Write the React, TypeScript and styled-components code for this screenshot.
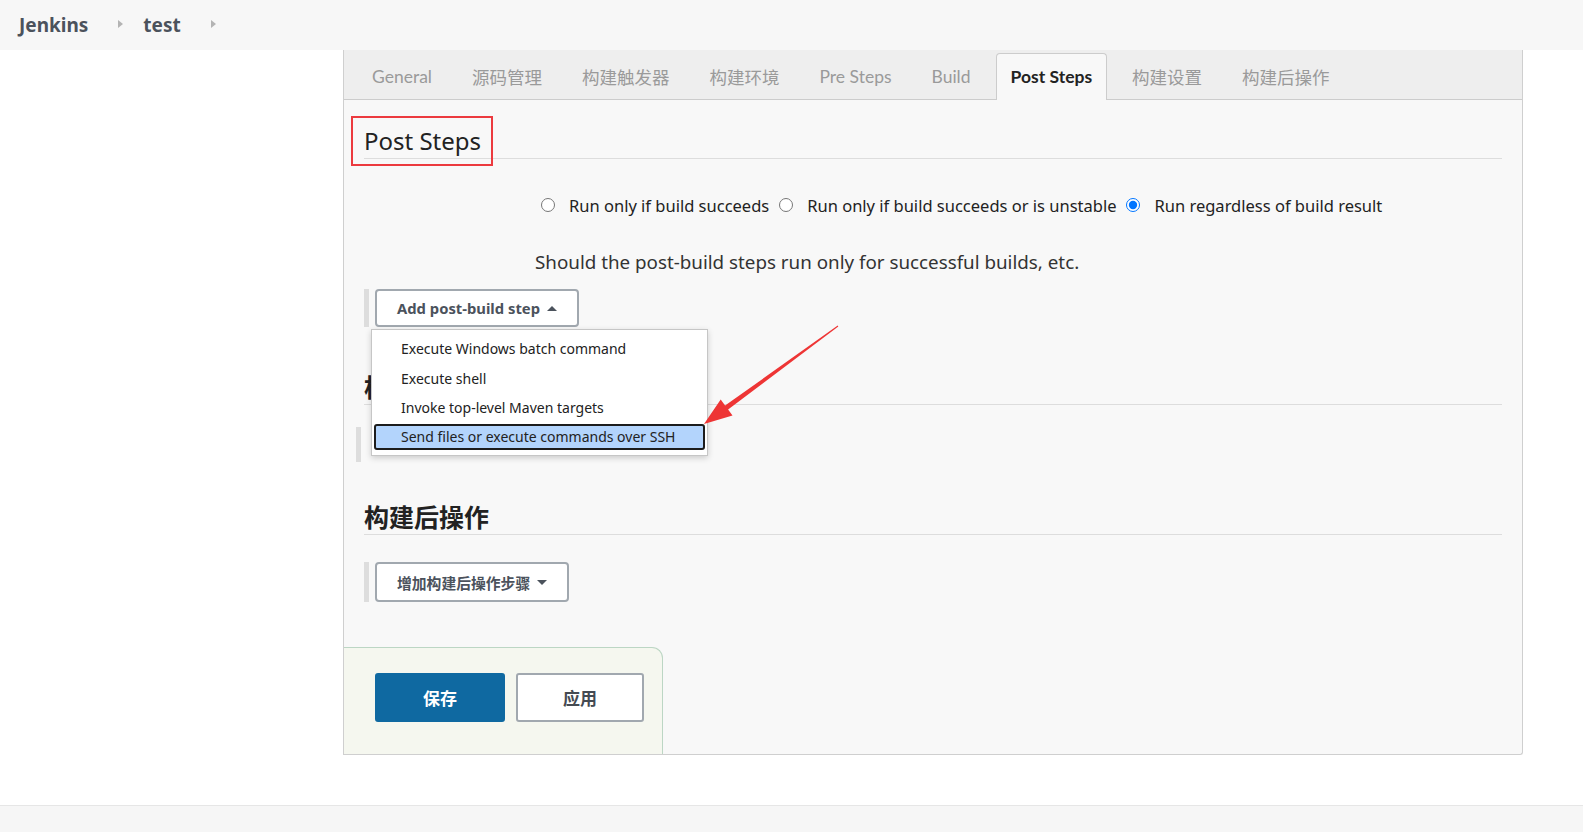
import React from "react";
import styled, { createGlobalStyle } from "styled-components";

const GlobalStyle = createGlobalStyle`
  html, body {
    margin: 0;
    padding: 0;
    background: #ffffff;
    font-family: "Noto Sans", "Noto Sans CJK SC", sans-serif;
    color: #333333;
  }
`;

const Page = styled.div`
  position: relative;
  width: 1583px;
  height: 832px;
  overflow: hidden;
  display: flex;
  flex-direction: column;
`;

const Header = styled.div`
  height: 50px;
  background: #f7f7f7;
  display: flex;
  align-items: center;
  padding-left: 19px;
  flex-shrink: 0;
`;

const Crumb = styled.span`
  font-size: 19px;
  font-weight: 700;
  color: #4b525c;
`;

const Chevron = styled.span`
  display: inline-block;
  width: 0;
  height: 0;
  border-top: 4px solid transparent;
  border-bottom: 4px solid transparent;
  border-left: 5px solid #b4b4b4;
  margin: 0 20px 2px 30px;
`;

const Main = styled.div`
  display: flex;
  flex-shrink: 0;
`;

const Sidebar = styled.div`
  width: 343px;
  flex-shrink: 0;
`;

const Panel = styled.div`
  width: 1178px;
  height: 704px;
  background: #f8f8f8;
  border: 1px solid #cfcfcf;
  border-top: none;
  border-radius: 0 0 3px 0;
  display: flex;
  flex-direction: column;
`;

const TabBar = styled.div`
  height: 49px;
  background: #eeeeee;
  border-bottom: 1px solid #cccccc;
  display: flex;
  align-items: flex-end;
  gap: 10px;
  padding-left: 13px;
`;

const Tab = styled.div<{ $active?: boolean }>`
  box-sizing: border-box;
  height: 47px;
  padding: 0 14px;
  display: flex;
  align-items: center;
  padding-bottom: 2px;
  font-family: Lato, "Noto Sans CJK SC", sans-serif;
  font-size: 17.5px;
  color: ${(p) => (p.$active ? "#222" : "#9a9a9a")};
  font-weight: ${(p) => (p.$active ? 700 : 400)};
  background: ${(p) => (p.$active ? "#f8f8f8" : "transparent")};
  border: 1px solid ${(p) => (p.$active ? "#cccccc" : "transparent")};
  border-bottom: none;
  border-radius: 4px 4px 0 0;
  margin-bottom: -1px;
`;

const Content = styled.div`
  flex: 1;
  padding: 0 20px;
  display: flex;
  flex-direction: column;
`;

const SectionTitle = styled.div<{ $top: number; $bold?: boolean }>`
  position: relative;
  margin-top: ${(p) => p.$top}px;
  font-size: ${(p) => (p.$bold ? 25 : 24)}px;
  font-weight: ${(p) => (p.$bold ? 700 : 400)};
  line-height: 34px;
  color: #222;
  border-bottom: 1px solid #dddddd;
`;

const Highlight = styled.div`
  position: absolute;
  left: -13px;
  top: -8px;
  width: 138px;
  height: 46px;
  border: 2px solid #ec3a3f;
`;

const Indented = styled.div`
  padding-left: 171px;
`;

const RadioRow = styled.div`
  margin-top: 34px;
  height: 24px;
  display: flex;
  align-items: center;
  font-size: 16.5px;
  color: #222;
`;

const RadioOption = styled.label`
  display: flex;
  align-items: center;
  margin-left: 6px;
  gap: 14px;
  margin-right: 4px;
`;

const Radio = styled.input`
  width: 14px;
  height: 14px;
  margin: 0;
  accent-color: #0075ff;
`;

const Description = styled.div`
  margin-top: 33px;
  line-height: 24px;
  font-size: 18.8px;
  color: #333;
`;

const ButtonRow = styled.div<{ $top: number }>`
  position: relative;
  margin-top: ${(p) => p.$top}px;
  border-left: 5px solid #dddddd;
  padding-left: 6px;
  display: flex;
`;

const DropButton = styled.button<{ $h: number }>`
  height: ${(p) => p.$h}px;
  box-sizing: border-box;
  padding: 0 20px;
  background: #ffffff;
  border: 2px solid #a1a8af;
  border-radius: 4px;
  font-family: "Noto Sans", "Noto Sans CJK SC", sans-serif;
  font-size: 14.8px;
  font-weight: 700;
  color: #4b525c;
  display: flex;
  align-items: center;
  gap: 7px;
`;

const Caret = styled.span<{ $up?: boolean }>`
  width: 0;
  height: 0;
  border-left: 5px solid transparent;
  border-right: 5px solid transparent;
  ${(p) =>
    p.$up ? "border-bottom: 5px solid #4b525c;" : "border-top: 5px solid #4b525c;"}
`;

const Menu = styled.div`
  position: absolute;
  left: 2px;
  top: 40px;
  width: 335px;
  padding: 4px 0 5px;
  background: #ffffff;
  border: 1px solid #c6c6c6;
  box-shadow: 0 2px 6px rgba(0, 0, 0, 0.18);
  z-index: 5;
`;

const MenuItem = styled.div<{ $selected?: boolean }>`
  height: ${(p) => (p.$selected ? "26px" : "29.5px")};
  box-sizing: border-box;
  display: flex;
  align-items: center;
  font-size: 14px;
  color: #222;
  padding-left: ${(p) => (p.$selected ? 25 : 29)}px;
  margin: ${(p) => (p.$selected ? "1px 2px 0" : "0")};
  background: ${(p) => (p.$selected ? "#b3d4fc" : "transparent")};
  border: ${(p) => (p.$selected ? "2px solid #1c1c1c" : "none")};
  border-radius: ${(p) => (p.$selected ? "3px" : "0")};
`;

const SideBar = styled.div`
  margin-top: 22px;
  margin-left: -8px;
  width: 5px;
  height: 35px;
  background: #dddddd;
`;

const BottomBar = styled.div`
  margin-top: auto;
  width: 287px;
  height: 81px;
  background: #f5f7ef;
  border-top: 1px solid #bcd6c4;
  border-right: 1px solid #bcd6c4;
  border-radius: 0 11px 0 0;
  display: flex;
  align-items: flex-start;
  gap: 11px;
  padding: 25px 0 0 31px;
  box-sizing: content-box;
`;

const ActionButton = styled.button<{ $primary?: boolean }>`
  width: ${(p) => (p.$primary ? 130 : 128)}px;
  height: 49px;
  box-sizing: border-box;
  border-radius: 3px;
  border: 2px solid ${(p) => (p.$primary ? "#0f69a1" : "#a1a8af")};
  background: ${(p) => (p.$primary ? "#0f69a1" : "#ffffff")};
  color: ${(p) => (p.$primary ? "#ffffff" : "#444a52")};
  font-family: "Noto Sans", "Noto Sans CJK SC", sans-serif;
  font-size: 17px;
  font-weight: 700;
`;

const Footer = styled.div`
  margin-top: 50px;
  flex: 1;
  background: #f6f6f6;
  border-top: 1px solid #e6e6e6;
`;

const Arrow = styled.svg`
  position: absolute;
  left: 690px;
  top: 315px;
  z-index: 10;
`;

const tabs = [
  "General",
  "源码管理",
  "构建触发器",
  "构建环境",
  "Pre Steps",
  "Build",
  "Post Steps",
  "构建设置",
  "构建后操作",
];

const menuItems = [
  "Execute Windows batch command",
  "Execute shell",
  "Invoke top-level Maven targets",
];

export default function App() {
  return (
    <Page>
      <GlobalStyle />
      <Header>
        <Crumb>Jenkins</Crumb>
        <Chevron />
        <Crumb>test</Crumb>
        <Chevron />
      </Header>
      <Main>
        <Sidebar />
        <Panel>
          <TabBar>
            {tabs.map((t) => (
              <Tab key={t} $active={t === "Post Steps"}>
                {t}
              </Tab>
            ))}
          </TabBar>
          <Content>
            <SectionTitle $top={24}>
              Post Steps
              <Highlight />
            </SectionTitle>
            <Indented>
              <RadioRow>
                <RadioOption>
                  <Radio type="radio" name="run" />
                  Run only if build succeeds
                </RadioOption>
                <RadioOption>
                  <Radio type="radio" name="run" />
                  Run only if build succeeds or is unstable
                </RadioOption>
                <RadioOption>
                  <Radio type="radio" name="run" defaultChecked />
                  Run regardless of build result
                </RadioOption>
              </RadioRow>
              <Description>
                Should the post-build steps run only for successful builds, etc.
              </Description>
            </Indented>
            <ButtonRow $top={15}>
              <DropButton $h={38}>
                Add post-build step <Caret $up />
              </DropButton>
              <Menu>
                {menuItems.map((m) => (
                  <MenuItem key={m}>{m}</MenuItem>
                ))}
                <MenuItem $selected>Send files or execute commands over SSH</MenuItem>
              </Menu>
            </ButtonRow>
            <SectionTitle $top={43} $bold>
              构建设置
            </SectionTitle>
            <SideBar />
            <SectionTitle $top={38} $bold>
              构建后操作
            </SectionTitle>
            <ButtonRow $top={27}>
              <DropButton $h={40}>
                增加构建后操作步骤 <Caret />
              </DropButton>
            </ButtonRow>
          </Content>
          <BottomBar>
            <ActionButton $primary>保存</ActionButton>
            <ActionButton>应用</ActionButton>
          </BottomBar>
        </Panel>
      </Main>
      <Footer />
      <Arrow width="160" height="120" viewBox="0 0 160 120">
        <polygon
          points="14,109 42.5,100.6 38.1,94.5 148.3,11.4 147.7,10.6 35.1,90.5 30.7,84.4"
          fill="#ee3535"
        />
      </Arrow>
    </Page>
  );
}
